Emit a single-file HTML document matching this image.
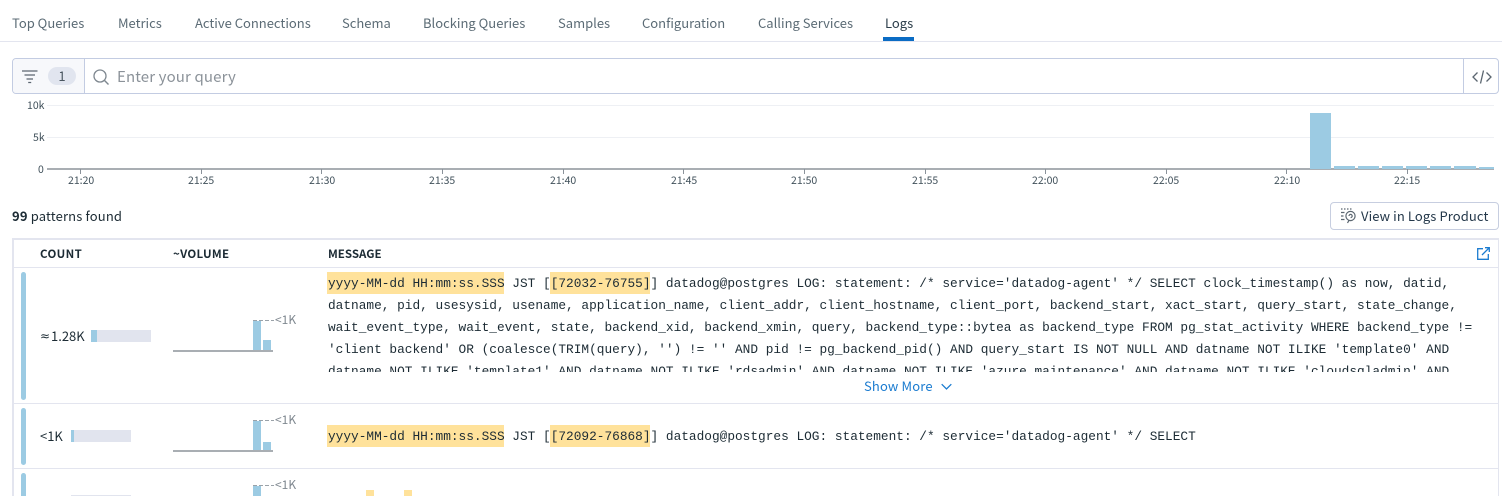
<!DOCTYPE html>
<html><head><meta charset="utf-8"><style>
html,body{margin:0;padding:0;background:#fff;overflow:hidden}
#w{width:1502px;height:496px;overflow:hidden;position:relative;font-family:"Noto Sans CJK JP","Liberation Sans",sans-serif;color:#1c2b34;font-size:13px}
.a{position:absolute}
.t{position:absolute;white-space:pre;line-height:18px}
.tab{top:14px;color:#5b6b75;font-size:13px}
.m{position:absolute;left:328px;white-space:pre;font:12.8px/22px "Liberation Mono",monospace;color:#1c2b34;height:22px;padding-top:1px;box-sizing:content-box}
.hl{position:absolute;background:#ffe29b}
.ax{position:absolute;font-size:10.5px;color:#3f4f59;line-height:12px;white-space:pre}
.g{position:absolute;left:47px;width:1447px;height:1px;background:#eef0f4}
.tk{position:absolute;top:169px;width:1px;height:5px;background:#8a929a}
.b{position:absolute;background:#9ccbe3}
.hd{position:absolute;top:245px;font-size:11.5px;font-weight:700;color:#1c2b34;line-height:18px}
.ln{position:absolute;left:14px;width:1484px;height:1px;background:#e3e5ef}
.d{position:absolute;left:253px;width:21px;height:1px;background:repeating-linear-gradient(90deg,#9aa2a9 0 4px,transparent 4px 6px)}
</style></head><body><div id="w">
<div class="t tab" style="left:12px">Top Queries</div>
<div class="t tab" style="left:118px">Metrics</div>
<div class="t tab" style="left:195px">Active Connections</div>
<div class="t tab" style="left:342px">Schema</div>
<div class="t tab" style="left:423px">Blocking Queries</div>
<div class="t tab" style="left:558px">Samples</div>
<div class="t tab" style="left:642px">Configuration</div>
<div class="t tab" style="left:758px">Calling Services</div>
<div class="t tab" style="left:885px;color:#2c3e4a">Logs</div>
<div class="a" style="left:0;top:41px;width:1502px;height:1px;background:#e3e5ef"></div>
<div class="a" style="left:883px;top:37px;width:31px;height:4px;background:#0b6cc4"></div>

<div class="a" style="left:12px;top:58px;width:1485px;height:34px;border:1px solid #c3cce2;border-radius:4px"></div>
<div class="a" style="left:13px;top:59px;width:71px;height:34px;background:#f7f8fb;border-right:1px solid #c3cce2;border-radius:3px 0 0 3px"></div>
<svg class="a" style="left:22px;top:69px" width="16" height="15" viewBox="0 0 16 15"><path d="M0 2h15.500M2.500 6h10.500M4.500 10h6.500M6.200 13.500h3" stroke="#5b6670" stroke-width="1.300" fill="none"/></svg>
<div class="a" style="left:48px;top:67px;width:28px;height:18px;border-radius:9px;background:#e1e5ef"></div>
<div class="t" style="left:48px;top:67px;width:28px;text-align:center;font-size:13px;color:#4a5660">1</div>
<svg class="a" style="left:92px;top:68px" width="18" height="18" viewBox="0 0 18 18"><circle cx="8" cy="8" r="6" fill="none" stroke="#7e878f" stroke-width="1.300"/><path d="M12.300 12.300L16.500 16.500" stroke="#7e878f" stroke-width="1.400"/></svg>
<div class="t" style="left:117px;top:68px;font-size:15px;color:#8b9299;letter-spacing:.13px">Enter your query</div>
<div class="a" style="left:1463px;top:59px;width:1px;height:34px;background:#c3cce2"></div>
<svg class="a" style="left:1472px;top:69px" width="20" height="16" viewBox="0 0 20 16"><path d="M5.500 3.500L1 8l4.500 4.500M14.500 3.500L19 8l-4.500 4.500M11.500 1.500L8.500 14.500" stroke="#5b6670" stroke-width="1.300" fill="none"/></svg>

<div class="ax" style="left:27px;top:100px">10k</div>
<div class="ax" style="left:33px;top:132px">5k</div>
<div class="ax" style="left:38px;top:164px">0</div>
<div class="g" style="top:105px"></div>
<div class="g" style="top:137px"></div>
<div class="a" style="left:47px;top:168px;width:1447px;height:2px;background:#a9aeb3"></div>
<div class="tk" style="left:80px"></div><div class="tk" style="left:201px"></div><div class="tk" style="left:321px"></div><div class="tk" style="left:442px"></div><div class="tk" style="left:563px"></div><div class="tk" style="left:683px"></div><div class="tk" style="left:804px"></div><div class="tk" style="left:925px"></div><div class="tk" style="left:1045px"></div><div class="tk" style="left:1286px"></div><div class="tk" style="left:1166px"></div><div class="tk" style="left:1407px"></div>
<div class="ax" style="left:68px;top:175px">21:20</div><div class="ax" style="left:188px;top:175px">21:25</div><div class="ax" style="left:309px;top:175px">21:30</div><div class="ax" style="left:429px;top:175px">21:35</div><div class="ax" style="left:550px;top:175px">21:40</div><div class="ax" style="left:671px;top:175px">21:45</div><div class="ax" style="left:791px;top:175px">21:50</div><div class="ax" style="left:912px;top:175px">21:55</div><div class="ax" style="left:1032px;top:175px">22:00</div><div class="ax" style="left:1153px;top:175px">22:05</div><div class="ax" style="left:1274px;top:175px">22:10</div><div class="ax" style="left:1394px;top:175px">22:15</div>
<div class="b" style="left:1310px;top:113px;width:21px;height:56px"></div>
<div class="b" style="left:1334px;top:166px;width:21px;height:3px"></div>
<div class="b" style="left:1358px;top:166px;width:21px;height:3px"></div>
<div class="b" style="left:1382px;top:166px;width:21px;height:3px"></div>
<div class="b" style="left:1406px;top:166px;width:21px;height:3px"></div>
<div class="b" style="left:1430px;top:166px;width:21px;height:3px"></div>
<div class="b" style="left:1454px;top:166px;width:22px;height:3px"></div>
<div class="b" style="left:1479px;top:167px;width:15px;height:2px"></div>

<div class="t" style="left:12px;top:207px;font-size:13px;letter-spacing:.15px"><b style="font-weight:700">99</b> patterns found</div>
<div class="a" style="left:1330px;top:202px;width:167px;height:26px;border:1px solid #c7cee0;border-radius:4px"></div>
<svg class="a" style="left:1340px;top:208px" width="17" height="16" viewBox="0 0 17 16" fill="none" stroke="#5b6670" stroke-width="1.200"><path d="M1 1h1.500M4 1h1.500M7 1h1.500M10 1h1.500M1 4.500h3.500M1 8h2.500M1 11.500h3.500"/><circle cx="10.500" cy="8" r="4.600"/><path d="M7.500 15l1.500-2.700M9 8a1.600 1.600 0 1 1 1.600 1.600"/></svg>
<div class="t" style="left:1361px;top:207px;font-size:13px;color:#24384a;letter-spacing:.1px">View in Logs Product</div>

<div class="a" style="left:12px;top:238px;width:1486px;height:2px;background:#e3e5ef"></div>
<div class="a" style="left:12px;top:238px;width:2px;height:258px;background:#e3e5ef"></div>
<div class="a" style="left:1498px;top:238px;width:1px;height:258px;background:#e3e5ef"></div>
<div class="hd" style="left:40px;letter-spacing:.35px">COUNT</div>
<div class="hd" style="left:173px;letter-spacing:.3px">~VOLUME</div>
<div class="hd" style="left:328px">MESSAGE</div>
<svg class="a" style="left:1477px;top:247px" width="13" height="13" viewBox="0 0 13 13" fill="none" stroke="#1c7cd0" stroke-width="1.300"><path d="M6 1.700H.7v10.600h10.600V7M5 8l7-7M8 .7h4.300V5"/></svg>
<div class="ln" style="top:267px"></div>
<div class="ln" style="top:403px"></div>
<div class="ln" style="top:468px"></div>

<div class="b" style="left:21px;top:272px;width:5px;height:128px;border-radius:3px"></div>
<div class="b" style="left:21px;top:408px;width:5px;height:57px;border-radius:3px"></div>
<div class="b" style="left:21px;top:473px;width:5px;height:23px;border-radius:3px 3px 0 0"></div>

<div class="t" style="left:40px;top:327px;font-size:12px;font-family:'DejaVu Sans',sans-serif">≈</div>
<div class="t" style="left:51px;top:327px;font-size:13px">1.28K</div>
<div class="a" style="left:91px;top:330px;width:60px;height:12px;background:#e1e4ee"></div>
<div class="b" style="left:91px;top:330px;width:6px;height:12px"></div>
<div class="t" style="left:40px;top:427px;font-size:13px">&lt;1K</div>
<div class="a" style="left:71px;top:430px;width:60px;height:12px;background:#e1e4ee"></div>
<div class="b" style="left:71px;top:430px;width:3px;height:12px"></div>
<div class="a" style="left:71px;top:495px;width:60px;height:1px;background:#e1e4ee"></div>

<div class="b" style="left:253px;top:321px;width:8px;height:30px"></div>
<div class="b" style="left:263px;top:340px;width:8px;height:11px"></div>
<div class="a" style="left:173px;top:350px;width:100px;height:2px;background:#a9aeb3"></div>
<div class="d" style="top:320px"></div>
<div class="t" style="left:275px;top:311px;font-size:12px;color:#7f8890">&lt;1K</div>
<div class="b" style="left:253px;top:421px;width:8px;height:30px"></div>
<div class="b" style="left:263px;top:442px;width:8px;height:9px"></div>
<div class="a" style="left:173px;top:450px;width:100px;height:2px;background:#a9aeb3"></div>
<div class="d" style="top:420px"></div>
<div class="t" style="left:275px;top:411px;font-size:12px;color:#7f8890">&lt;1K</div>
<div class="b" style="left:253px;top:486px;width:8px;height:10px"></div>
<div class="d" style="top:485px"></div>
<div class="t" style="left:275px;top:476px;font-size:12px;color:#7f8890">&lt;1K</div>

<div class="hl" style="left:327px;top:272px;width:177px;height:22px"></div>
<div class="hl" style="left:550px;top:272px;width:100px;height:22px"></div>
<div class="hl" style="left:327px;top:425px;width:177px;height:22px"></div>
<div class="hl" style="left:550px;top:425px;width:100px;height:22px"></div>
<div class="hl" style="left:366px;top:490px;width:8px;height:6px"></div>
<div class="hl" style="left:404px;top:490px;width:8px;height:6px"></div>

<div class="m" style="top:272px">yyyy-MM-dd HH:mm:ss.SSS JST [[72032-76755]] datadog@postgres LOG: statement: /* service='datadog-agent' */ SELECT clock_timestamp() as now, datid,</div>
<div class="m" style="top:294px">datname, pid, usesysid, usename, application_name, client_addr, client_hostname, client_port, backend_start, xact_start, query_start, state_change,</div>
<div class="m" style="top:316px">wait_event_type, wait_event, state, backend_xid, backend_xmin, query, backend_type::bytea as backend_type FROM pg_stat_activity WHERE backend_type !=</div>
<div class="m" style="top:338px">'client backend' OR (coalesce(TRIM(query), '') != '' AND pid != pg_backend_pid() AND query_start IS NOT NULL AND datname NOT ILIKE 'template0' AND</div>
<div class="m" style="top:360px;height:11px;overflow:hidden">datname NOT ILIKE 'template1' AND datname NOT ILIKE 'rdsadmin' AND datname NOT ILIKE 'azure_maintenance' AND datname NOT ILIKE 'cloudsqladmin' AND</div>
<div class="m" style="top:425px">yyyy-MM-dd HH:mm:ss.SSS JST [[72092-76868]] datadog@postgres LOG: statement: /* service='datadog-agent' */ SELECT</div>

<div class="t" style="left:864px;top:377px;font-size:13px;color:#1c7cd0;letter-spacing:.15px">Show More</div>
<svg class="a" style="left:941px;top:383px" width="11" height="8" viewBox="0 0 11 8"><path d="M.7 1.200L5.500 6l4.800-4.800" stroke="#1c7cd0" stroke-width="1.300" fill="none"/></svg>
</div></body></html>
